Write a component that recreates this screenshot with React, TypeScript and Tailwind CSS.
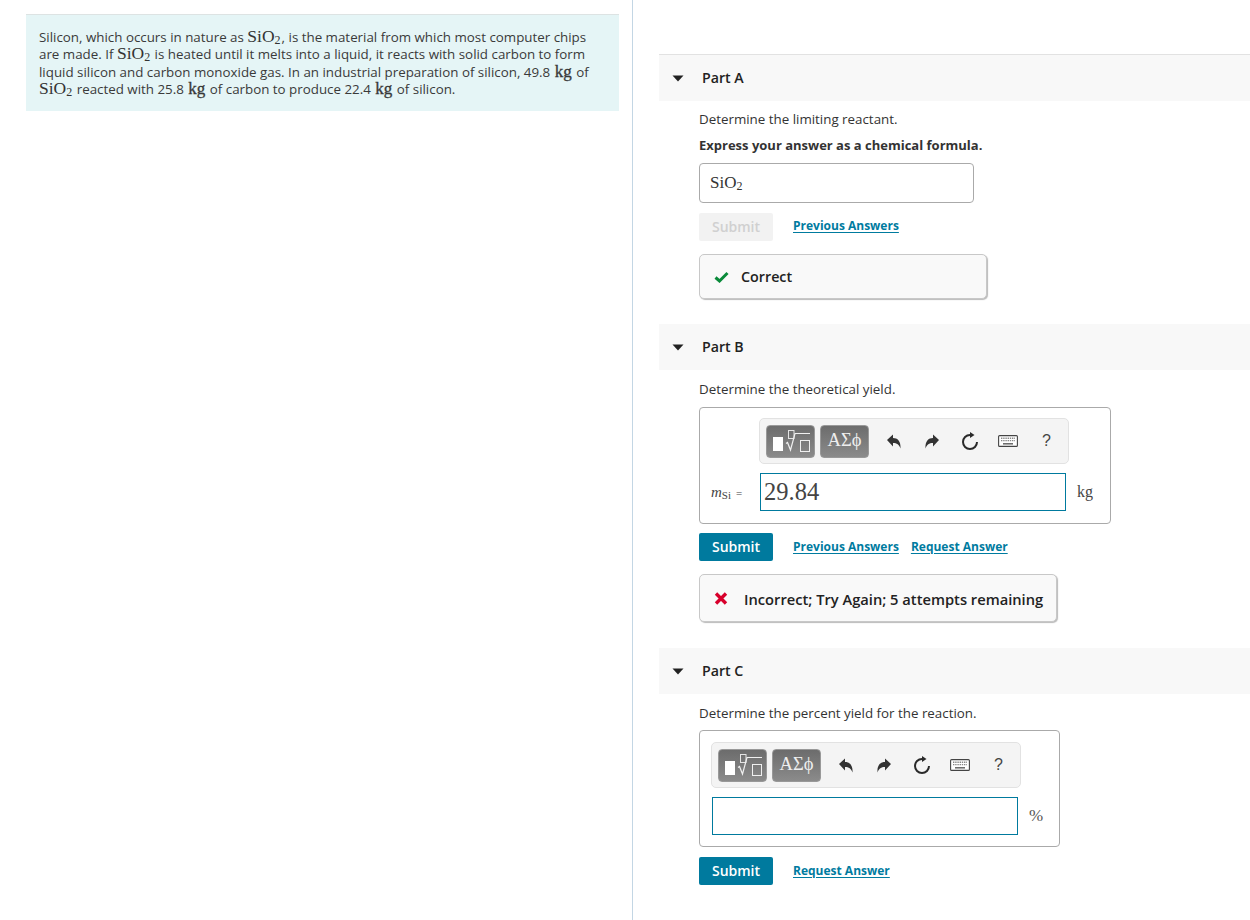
import React from "react";

const Sans = "font-['Open_Sans','Noto_Sans',sans-serif]";
const Serif = "font-['Liberation_Serif','DejaVu_Serif',serif]";

const Formula = ({ inBox = false }: { inBox?: boolean }) => (
  <span className={`${Serif} ${inBox ? "text-[17px]" : "text-[17.5px] mr-[1px]"} leading-[0] text-[#333]`}>
    SiO<span className="text-[12px] leading-[0] align-[-2px]">2</span>
  </span>
);

const Kg = () => <span className={`${Serif} mx-[1px] text-[17px] leading-[0] [-webkit-text-stroke:0.3px_#333]`}>kg</span>;

const PartHeader = ({ title }: { title: string }) => (
  <div className="flex items-center h-[46px] bg-[#f8f8f8] pl-[13px]">
    <svg width="12" height="7" viewBox="0 0 12 7" className="mr-[18px]">
      <path d="M0.5 0.5 H11.5 L6 6.5 Z" fill="#222" />
    </svg>
    <span className="text-[14.2px] font-semibold text-[#222] pb-[1px]">{title}</span>
  </div>
);

const LinkText = ({ children, className = "" }: { children: React.ReactNode; className?: string }) => (
  <a className={`${className} block pb-[1px] leading-[16px] text-[12px] font-bold text-[#007b9f] underline underline-offset-2`}>{children}</a>
);

const SubmitButton = ({ disabled = false }: { disabled?: boolean }) => (
  <button
    className={`w-[74px] h-[28px] pb-[2px] rounded-[2px] text-[14px] font-semibold ${
      disabled ? "bg-[#f2f2f2] text-[#d0d0d0]" : "bg-[#007a9e] text-white"
    }`}
  >
    Submit
  </button>
);

const Feedback = ({ ok, width, height, children }: { ok: boolean; width: string; height: string; children: React.ReactNode }) => (
  <div className={`${width} ${height} flex items-center rounded-[5px] border border-[#c8c8c8] bg-[#f9f9f9] shadow-[1px_1px_1px_#bbb] pl-[14px] font-semibold text-[#222]`}>
    {ok ? (
      <svg width="15" height="12" viewBox="0 0 15 12" className="mr-[12px]">
        <path d="M1.5 6.5 L5.5 10 L13.5 2" fill="none" stroke="#0a8a3a" strokeWidth="3" />
      </svg>
    ) : (
      <svg width="14" height="13" viewBox="0 0 14 13" className="mr-[16px]">
        <path d="M2 1.5 L12 11.5 M12 1.5 L2 11.5" fill="none" stroke="#d8002c" strokeWidth="3.4" />
      </svg>
    )}
    {children}
  </div>
);

// toolbar template button drawings
const TemplateIcon = () => (
  <svg width="49" height="33" viewBox="0 0 49 33">
    <rect x="7" y="12" width="10" height="14" fill="#fff" />
    <rect x="22.5" y="5.5" width="5.5" height="8" fill="none" stroke="#e4e4e4" strokeWidth="1" />
    <path d="M20 18.5 L21.5 17.5 L24.5 25 L29 8.5 H44" fill="none" stroke="#f0f0f0" strokeWidth="1.2" />
    <rect x="34.5" y="15.5" width="9" height="11" fill="none" stroke="#f0f0f0" strokeWidth="1" />
  </svg>
);

const Toolbar = ({ marginLeft }: { marginLeft: string }) => (
  <div className={`${marginLeft} w-[310px] h-[46px] flex items-center rounded-[5px] border border-[#e2e2e2] bg-[#f4f4f4] pl-[6px]`}>
    <div className="w-[49px] h-[33px] rounded-[4px] border border-[#999] bg-gradient-to-b from-[#6c6c6c] to-[#8b8b8b] [&>svg]:-m-px">
      <TemplateIcon />
    </div>
    <div className={`${Serif} ml-[5px] w-[49px] h-[33px] flex items-center justify-center rounded-[4px] border border-[#999] bg-gradient-to-b from-[#6c6c6c] to-[#8b8b8b] text-[#eee] text-[18.5px]`}>
      ΑΣϕ
    </div>
    <svg width="14" height="15" viewBox="0 0 14 15" className="ml-[18px]">
      <path d="M0 6 L6 0.5 V4 C10.5 4 14 7 13.5 14.5 C12 10.5 10 9 6 9 V12.5 Z" fill="#333" />
    </svg>
    <svg width="14" height="15" viewBox="0 0 14 15" className="ml-[24px]">
      <path d="M14 6 L8 0.5 V4 C3.5 4 0 7 0.5 14.5 C2 10.5 4 9 8 9 V12.5 Z" fill="#333" />
    </svg>
    <svg width="18" height="20" viewBox="0 0 18 20" className="ml-[22px]">
      <path d="M9 4 A7 7 0 1 0 16 11" fill="none" stroke="#2a2a2a" strokeWidth="2" />
      <path d="M9 1 L13.5 4 L9 7 Z" fill="#2a2a2a" />
    </svg>
    <svg width="20" height="12" viewBox="0 0 20 12" className="ml-[19px]">
      <rect x="0.6" y="0.6" width="18.8" height="10.8" rx="1" fill="#fff" stroke="#444" strokeWidth="1.1" />
      <path d="M3 3.2 H17 M3 5.6 H17" stroke="#888" strokeWidth="1.4" strokeDasharray="1.4 0.8" />
      <path d="M5 8.8 H15" stroke="#666" strokeWidth="1.5" />
    </svg>
    <span className="ml-[24px] text-[16px] text-[#444] font-['Liberation_Sans',sans-serif]">?</span>
  </div>
);

const AnswerInput = ({ width, value }: { width: string; value?: string }) => (
  <div className={`${width} h-[38px] flex items-center border border-[#007a9e] bg-white pl-[3px] ${Serif} text-[24.5px] text-[#444]`}>
    {value}
  </div>
);

export default function App() {
  return (
    <div className={`${Sans} flex h-[920px] w-[1250px] overflow-hidden bg-white text-[#333]`}>
      {/* problem statement */}
      <div className="w-[633px] shrink-0 border-r border-[#c3d6e4] pl-[26px] pr-[13px] pt-[14px]">
        <div className="h-[97px] border-t border-[#dde3e3] bg-[#e5f5f6] pl-[13px] pt-[14px] text-[13.35px] leading-[17.4px] text-[#3a3a3a]">
          <p>
            Silicon, which occurs in nature as <Formula />, is the material from which most computer chips
            <br />
            are made. If <Formula /> is heated until it melts into a liquid, it reacts with solid carbon to form
            <br />
            liquid silicon and carbon monoxide gas. In an industrial preparation of silicon, 49.8 <Kg /> of
            <br />
            <Formula /> reacted with 25.8 <Kg /> of carbon to produce 22.4 <Kg /> of silicon.
          </p>
        </div>
      </div>

      <div className="flex-1 pl-[26px] pt-[54px]">
        {/* Part A */}
        <div className="border-t border-[#e2e2e2]">
          <PartHeader title="Part A" />
        </div>
        <div className="pl-[40px]">
          <p className="mt-[9px] text-[13.35px] leading-[18px]">Determine the limiting reactant.</p>
          <p className="mt-[8px] text-[13px] leading-[18px] font-bold">Express your answer as a chemical formula.</p>
          <div className="mt-[9px] w-[275px] h-[40px] flex items-center rounded-[4px] border border-[#aaa] pl-[10px] pt-[2px]">
            <Formula inBox />
          </div>
          <div className="mt-[10px] flex items-center gap-[20px]">
            <SubmitButton disabled />
            <LinkText className="pb-[3px]">Previous Answers</LinkText>
          </div>
          <div className="mt-[13px]">
            <Feedback ok width="w-[288px]" height="h-[45px]">
              <span className="text-[14.3px]">Correct</span>
            </Feedback>
          </div>
        </div>

        {/* Part B */}
        <div className="mt-[25px]">
          <PartHeader title="Part B" />
        </div>
        <div className="pl-[40px]">
          <p className="mt-[10px] text-[13.35px] leading-[18px]">Determine the theoretical yield.</p>
          <div className="mt-[9px] w-[412px] h-[117px] rounded-[4px] border border-[#aaa] pt-[10px]">
            <Toolbar marginLeft="ml-[59px]" />
            <div className="mt-[9px] flex items-center">
              <span className={`${Serif} ml-[11px] w-[49px] text-[#444] text-[15px]`}>
                <i>m</i>
                <span className="text-[11px] align-[-2px] leading-none">Si</span>
                <span className="ml-[5px] text-[11px]">=</span>
              </span>
              <AnswerInput width="w-[306px]" value="29.84" />
              <span className={`${Serif} ml-[11px] text-[16px] text-[#444]`}>kg</span>
            </div>
          </div>
          <div className="mt-[9px] flex items-center">
            <SubmitButton />
            <LinkText className="ml-[20px]">Previous Answers</LinkText>
            <LinkText className="ml-[12px]">Request Answer</LinkText>
          </div>
          <div className="mt-[13px]">
            <Feedback ok={false} width="w-[358px]" height="h-[48px]">
              <span className="text-[14.7px] pt-[2px]">Incorrect; Try Again; 5 attempts remaining</span>
            </Feedback>
          </div>
        </div>

        {/* Part C */}
        <div className="mt-[26px]">
          <PartHeader title="Part C" />
        </div>
        <div className="pl-[40px]">
          <p className="mt-[10px] text-[13.35px] leading-[18px]">Determine the percent yield for the reaction.</p>
          <div className="mt-[8px] w-[361px] h-[117px] rounded-[4px] border border-[#aaa] pt-[11px]">
            <Toolbar marginLeft="ml-[11px]" />
            <div className="mt-[9px] ml-[12px] flex items-center">
              <AnswerInput width="w-[306px]" />
              <span className={`${Serif} ml-[11px] text-[17px] text-[#555]`}>%</span>
            </div>
          </div>
          <div className="mt-[10px] flex items-center gap-[20px]">
            <SubmitButton />
            <LinkText>Request Answer</LinkText>
          </div>
        </div>
      </div>
    </div>
  );
}
